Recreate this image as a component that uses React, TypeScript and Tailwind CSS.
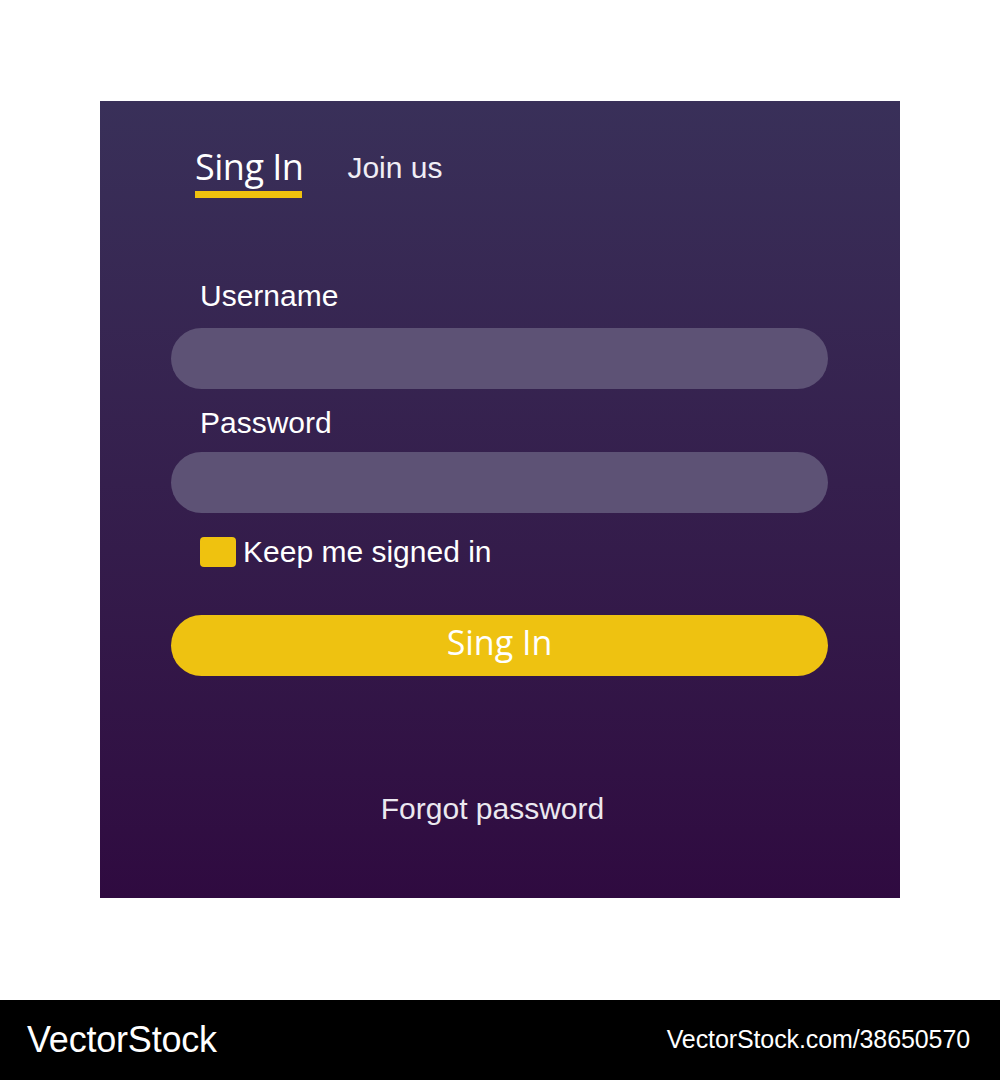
import React from 'react';

const App: React.FC = () => {
  return (
    <div className="w-[1000px] h-[1080px] bg-white flex flex-col" style={{ fontFamily: '"Liberation Sans", Arial, sans-serif' }}>
      {/* Card */}
      <div className="flex-1 pt-[101px] pl-[100px]">
        <div className="w-[800px] h-[797px] bg-gradient-to-b from-[#393059] to-[#2f0a40] flex flex-col pl-[71px] pr-[72px]">
          {/* Tabs */}
          <div className="flex items-start gap-[44px] pl-[24px] pt-[44px]">
            <div className="flex flex-col">
              <span className="text-[36px] leading-[44px] text-white tracking-[-0.5px]" style={{ fontFamily: '"Open Sans", sans-serif' }}>Sing In</span>
              <div className="mt-[2px] h-[7px] w-[107px] bg-[#f0c20e]" />
            </div>
            <span className="text-[30px] leading-[44px] text-[#f0eef5] mt-[1px]">Join us</span>
          </div>

          {/* Username */}
          <label className="mt-[82px] pl-[29px] text-[30px] leading-[32px] text-white">Username</label>
          <div className="mt-[16px] h-[61px] rounded-full bg-[#5d5275]" />

          {/* Password */}
          <label className="mt-[18px] pl-[29px] text-[30px] leading-[32px] text-white">Password</label>
          <div className="mt-[13px] h-[61px] rounded-full bg-[#5d5275]" />

          {/* Keep signed in */}
          <div className="mt-[23px] pl-[29px] flex items-center gap-[7px]">
            <div className="w-[36px] h-[30px] rounded-[4px] bg-[#efc20f]" />
            <span className="text-[30px] leading-[32px] text-white">Keep me signed in</span>
          </div>

          {/* Button */}
          <div className="mt-[47px] h-[61px] rounded-full bg-[#eec211] flex items-center justify-center">
            <span className="text-[34px] leading-[40px] text-white -mt-[8px]" style={{ fontFamily: '"Open Sans", sans-serif' }}>Sing In</span>
          </div>

          {/* Forgot */}
          <div className="mt-[116px] flex justify-center pr-[14px]">
            <span className="text-[30px] leading-[34px] text-[#ebe8f0]">Forgot password</span>
          </div>
        </div>
      </div>

      {/* Footer */}
      <div className="h-[80px] bg-black flex items-center justify-between pl-[27px] pr-[30px]">
        <span className="text-[36px] text-white tracking-[-0.2px]">VectorStock</span>
        <span className="text-[25px] text-white tracking-[-0.1px]">VectorStock.com/38650570</span>
      </div>
    </div>
  );
};

export default App;
